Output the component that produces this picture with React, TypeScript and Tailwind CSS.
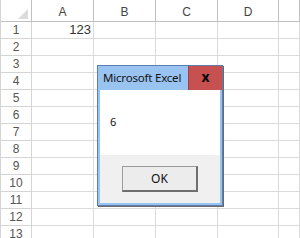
import React from "react";

const cols = ["A", "B", "C", "D", ""];
const rows = Array.from({ length: 13 }, (_, i) => i + 1);

export default function App() {
  return (
    <div
      className="relative w-[300px] h-[238px] overflow-hidden bg-white"
      style={{ fontFamily: '"Liberation Sans", Arial, sans-serif' }}
    >
      <div className="grid grid-cols-[31px_62px_62px_62px_61px_1fr] border-l border-[#d4d4d4]">
        <div className="relative h-[22px] border-r border-b border-[#bfbfbf]">
          <svg className="absolute left-[16px] top-[8px]" width="12" height="12" viewBox="0 0 12 12">
            <polygon points="11,1 11,11 1,11" fill="#dcdcdc" />
          </svg>
        </div>
        {cols.map((c, i) => (
          <div
            key={i}
            className="h-[22px] border-r border-b border-[#bfbfbf] flex items-center justify-center text-[12px] text-[#444] pt-[3px]"
          >
            {c}
          </div>
        ))}
        {rows.map((r) => (
          <React.Fragment key={r}>
            <div className="h-[17px] border-r border-b border-[#d4d4d4] flex items-center justify-center text-[12px] text-[#555]">
              {r}
            </div>
            {cols.map((_, i) => (
              <div
                key={i}
                className="h-[17px] border-r border-b border-[#dadada] flex items-center justify-end pr-[2px] text-[13px] text-[#333]"
              >
                {r === 1 && i === 0 ? "123" : ""}
              </div>
            ))}
          </React.Fragment>
        ))}
      </div>

      <div
        className="absolute left-[97px] top-[65px] w-[126px] h-[141px] border border-[#5d7fad] flex flex-col shadow-[1px_1px_0_#6b6b6b]"
        style={{ fontFamily: '"Noto Sans", "Open Sans", sans-serif' }}
      >
        <div className="h-[24px] flex bg-[#99c4f2]">
          <div className="flex-1 flex items-center pl-[5px] text-[11.5px] text-[#111] tracking-[-0.2px]">
            Microsoft Excel
          </div>
          <div className="w-[34px] bg-[#c75050] border-l border-[#a04040] flex items-center justify-center text-[14px] font-bold text-black leading-none pb-[2px]">
            x
          </div>
        </div>
        <div className="flex-1 flex flex-col border-x-2 border-b-2 border-[#99c4f2]">
          <div className="h-[65px] bg-white pl-[10px] pt-[24px] text-[11px] text-[#111]">6</div>
          <div className="flex-1 bg-[#f0f0f0] flex justify-center pt-[11px]">
            <div className="w-[76px] h-[26px] bg-[#ececec] border border-[#9a9a9a] border-r-2 border-b-2 border-r-[#6e6e6e] border-b-[#6e6e6e] flex items-center justify-center text-[12px] text-[#111]">
              OK
            </div>
          </div>
        </div>
      </div>
    </div>
  );
}
